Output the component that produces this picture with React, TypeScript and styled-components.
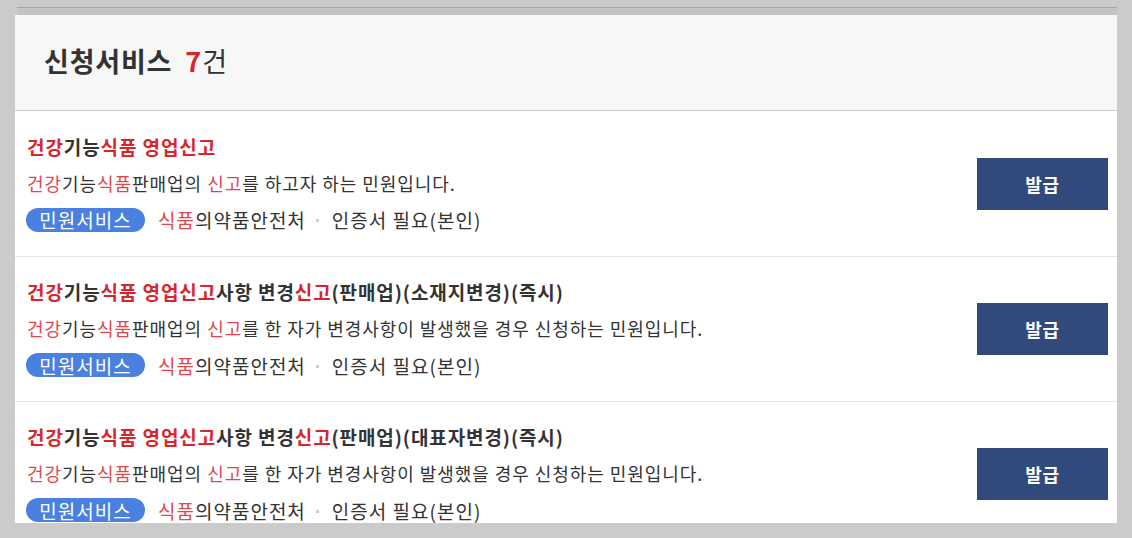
import React from "react";
import styled, { createGlobalStyle } from "styled-components";

const GlobalStyle = createGlobalStyle`
  html, body {
    margin: 0;
    padding: 0;
    background: #cbcbcb;
  }
  body {
    font-family: "Noto Sans CJK KR", "Noto Sans", sans-serif;
    color: #333;
  }
`;

const Page = styled.div`
  padding: 7px 15px 0 15px;
  width: 1102px;
`;

const ScrollTrack = styled.div`
  margin-left: 2px;
  height: 7px;
  border-top: 1px solid #a6a6a6;
  background: #c4c4c4;
`;

const Panel = styled.section`
  height: 508px;
  overflow: hidden;
  background: #fff;
`;

const Header = styled.header`
  height: 96px;
  box-sizing: border-box;
  display: flex;
  align-items: center;
  padding: 0 0 4px 29px;
  background: #f7f7f7;
  border-bottom: 1px solid #cccccc;
`;

const HeaderTitle = styled.h2`
  margin: 0;
  font-size: 27px;
  font-weight: 700;
  line-height: 1;
  color: #333;
  letter-spacing: 0.8px;
`;

const Count = styled.span`
  margin-left: 13px;
  color: #d9262d;
  letter-spacing: 1px;
`;

const Unit = styled.span`
  font-weight: 400;
`;

const List = styled.ul`
  list-style: none;
  margin: 0;
  padding: 0;
`;

const Item = styled.li`
  height: 144px;
  display: flex;
  align-items: center;
  justify-content: space-between;
  padding: 0 9px 0 11px;
  border-bottom: 1px solid #e5e5e5;

  &:first-child {
    height: 145px;
  }
`;

const Info = styled.div`
  display: flex;
  flex-direction: column;
`;

const Title = styled.div`
  font-size: 19px;
  font-weight: 700;
  line-height: 36px;
  color: #333;
  padding-left: 1px;
  letter-spacing: 0.9px;
`;

const Desc = styled.div`
  font-size: 18px;
  line-height: 36px;
  color: #333;
  padding-left: 1px;
  letter-spacing: 0.95px;
`;

const Hl = styled.span<{ $strong?: boolean }>`
  color: ${(p) => (p.$strong ? "#d9262d" : "#e0474c")};
`;

const Meta = styled.div`
  display: flex;
  align-items: center;
  height: 38px;
  font-size: 19px;
  color: #333;
  letter-spacing: 1px;
`;

const Badge = styled.span`
  display: inline-flex;
  align-items: center;
  justify-content: center;
  width: 119px;
  height: 24px;
  border-radius: 12px;
  background: #4a80e0;
  color: #fff;
  font-size: 19px;
  margin-right: 13px;
`;

const Dot = styled.span`
  width: 3px;
  height: 3px;
  background: #cfcfcf;
  margin: 2px 13px 0 10px;
`;

const IssueButton = styled.button`
  width: 131px;
  height: 52px;
  border: 0;
  background: #314a7b;
  color: #fff;
  font-family: inherit;
  font-size: 18px;
  font-weight: 700;
  letter-spacing: 0.8px;
  cursor: pointer;
`;

type Seg = [string, boolean?];

const rich = (segs: Seg[], strong?: boolean) =>
  segs.map(([t, red], i) =>
    red ? (
      <Hl key={i} $strong={strong}>
        {t}
      </Hl>
    ) : (
      <React.Fragment key={i}>{t}</React.Fragment>
    )
  );

const descShort: Seg[] = [
  ["건강", true],
  ["기능"],
  ["식품", true],
  ["판매업의 "],
  ["신고", true],
  ["를 하고자 하는 민원입니다."],
];

const descChange: Seg[] = [
  ["건강", true],
  ["기능"],
  ["식품", true],
  ["판매업의 "],
  ["신고", true],
  ["를 한 자가 변경사항이 발생했을 경우 신청하는 민원입니다."],
];

const services: { title: Seg[]; desc: Seg[] }[] = [
  {
    title: [["건강", true], ["기능"], ["식품 영업신고", true]],
    desc: descShort,
  },
  {
    title: [
      ["건강", true],
      ["기능"],
      ["식품 영업신고", true],
      ["사항 변경"],
      ["신고", true],
      ["(판매업)(소재지변경)(즉시)"],
    ],
    desc: descChange,
  },
  {
    title: [
      ["건강", true],
      ["기능"],
      ["식품 영업신고", true],
      ["사항 변경"],
      ["신고", true],
      ["(판매업)(대표자변경)(즉시)"],
    ],
    desc: descChange,
  },
];

export default function App() {
  return (
    <>
      <GlobalStyle />
      <Page>
        <ScrollTrack />
        <Panel>
          <Header>
            <HeaderTitle>
              신청서비스<Count>7</Count>
              <Unit>건</Unit>
            </HeaderTitle>
          </Header>
          <List>
            {services.map((s, i) => (
              <Item key={i}>
                <Info>
                  <Title>{rich(s.title, true)}</Title>
                  <Desc>{rich(s.desc)}</Desc>
                  <Meta>
                    <Badge>민원서비스</Badge>
                    <span>
                      <Hl>식품</Hl>의약품안전처
                    </span>
                    <Dot />
                    <span>인증서 필요(본인)</span>
                  </Meta>
                </Info>
                <IssueButton>발급</IssueButton>
              </Item>
            ))}
          </List>
        </Panel>
      </Page>
    </>
  );
}
